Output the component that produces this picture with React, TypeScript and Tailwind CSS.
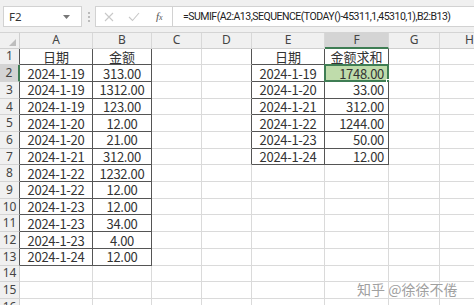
import React from 'react';

const cols = [
  { key: '', w: 20 },
  { key: 'A', w: 73 },
  { key: 'B', w: 59 },
  { key: 'C', w: 50 },
  { key: 'D', w: 50 },
  { key: 'E', w: 73 },
  { key: 'F', w: 64 },
  { key: 'G', w: 51 },
  { key: 'H', w: 60 },
];

const leftData = [
  ['日期', '金额'],
  ['2024-1-19', '313.00'],
  ['2024-1-19', '1312.00'],
  ['2024-1-19', '123.00'],
  ['2024-1-20', '12.00'],
  ['2024-1-20', '21.00'],
  ['2024-1-21', '312.00'],
  ['2024-1-22', '1232.00'],
  ['2024-1-22', '12.00'],
  ['2024-1-23', '12.00'],
  ['2024-1-23', '34.00'],
  ['2024-1-23', '4.00'],
  ['2024-1-24', '12.00'],
];

const rightData = [
  ['日期', '金额求和'],
  ['2024-1-19', '1748.00'],
  ['2024-1-20', '33.00'],
  ['2024-1-21', '312.00'],
  ['2024-1-22', '1244.00'],
  ['2024-1-23', '50.00'],
  ['2024-1-24', '12.00'],
];

// tables: col index 1..8 (A..H), row 1..n
function inTable(c: number, r: number) {
  if (c >= 1 && c <= 2 && r >= 1 && r <= 13) return true;
  if (c >= 5 && c <= 6 && r >= 1 && r <= 7) return true;
  return false;
}

function cellText(c: number, r: number): string {
  if (c >= 1 && c <= 2 && r >= 1 && r <= 13) return leftData[r - 1][c - 1];
  if (c >= 5 && c <= 6 && r >= 1 && r <= 7) return rightData[r - 1][c - 5];
  return '';
}

const ROWS = 16;
const cellFont = { fontFamily: '"Noto Sans CJK SC", "Noto Sans", sans-serif' };

function Cell({ c, r }: { c: number; r: number }) {
  const darkR = inTable(c, r) || inTable(c + 1, r);
  const darkB = inTable(c, r) || inTable(c, r + 1);
  const selected = c === 6 && r === 2;
  const text = cellText(c, r);
  const align = c === 6 && r > 1 ? 'justify-end pr-[4px]' : 'justify-center';
  const tight = r > 1 ? 'tracking-[-0.3px]' : '';
  return (
    <div
      className={`relative flex items-center ${align} ${tight} border-r border-b text-[13px] leading-none text-[#333] whitespace-nowrap ${
        darkR ? 'border-r-[#555]' : 'border-r-[#dadada]'
      } ${darkB ? 'border-b-[#555]' : 'border-b-[#dadada]'} ${selected ? 'bg-[#bfdcab]' : 'bg-white'}`}
      style={cellFont}
    >
      {text}
      {selected && (
        <>
          <div className="absolute -left-px -top-px -right-px -bottom-px border-2 border-[#3f7d54]" />
          <div className="absolute -right-[3px] -bottom-[3px] w-[5px] h-[5px] bg-[#3f7d54] border border-white" />
        </>
      )}
    </div>
  );
}

export default function App() {
  const template = cols.map((c) => `${c.w}px`).join(' ');
  return (
    <div className="w-[474px] h-[305px] overflow-hidden bg-white relative" style={{ fontFamily: '"Noto Sans", sans-serif' }}>
      {/* formula bar */}
      <div className="h-[33px] bg-[#f0f0f0] flex items-start pt-[6px] pl-[3px] border-b border-[#d4d4d4]">
        <div className="w-[79px] shrink-0 h-[21px] bg-white border border-[#d2d2d2] flex items-center justify-between px-[5px]">
          <span className="text-[11.5px] text-[#333]">F2</span>
          <svg width="7" height="4" viewBox="0 0 7 4" className="mr-[6px]">
            <path d="M0 0 L7 0 L3.5 4 Z" fill="#777" />
          </svg>
        </div>
        <div className="w-[14px] shrink-0 h-[21px] flex flex-col items-center justify-center gap-[2px]">
          <div className="w-[2px] h-[2px] bg-[#bbb]" />
          <div className="w-[2px] h-[2px] bg-[#bbb]" />
          <div className="w-[2px] h-[2px] bg-[#bbb]" />
        </div>
        <div className="flex-1 min-w-0 overflow-hidden h-[21px] bg-white border border-[#d2d2d2] border-r-0 flex items-center ml-[-1px]">
          <div className="w-[76px] shrink-0 flex items-center pl-[8px] gap-[14px]">
            <svg width="10" height="10" viewBox="0 0 10 10">
              <path d="M1 1 L9 9 M9 1 L1 9" stroke="#c8c8c8" strokeWidth="1.1" />
            </svg>
            <svg width="12" height="10" viewBox="0 0 12 10">
              <path d="M1 5 L4.5 8.5 L11 1" stroke="#c8c8c8" strokeWidth="1.1" fill="none" />
            </svg>
            <span className="text-[11px] italic text-[#555] ml-[2px]" style={{ fontFamily: '"Liberation Serif", serif' }}>
              f<span className="text-[8px]">x</span>
            </span>
          </div>
          <div className="w-px shrink-0 h-[21px] bg-[#d2d2d2]" />
          <span className="ml-[10px] text-[10.5px] text-[#222] whitespace-nowrap tracking-[-0.5px]" style={{ fontFamily: 'Roboto, sans-serif' }}>
            =SUMIF(A2:A13,SEQUENCE(TODAY()-45311,1,45310,1),B2:B13)
          </span>
        </div>
      </div>

      {/* sheet */}
      <div
        className="grid"
        style={{ gridTemplateColumns: template, gridTemplateRows: `15.6px repeat(${ROWS}, 16.7px)` }}
      >
        {cols.map((col, i) => {
          if (i === 0) {
            return (
              <div key="corner" className="relative bg-[#f0f0f0] border-r border-b border-[#cfcfcf]">
                <svg width="7" height="7" viewBox="0 0 7 7" className="absolute right-[3px] bottom-[2px]">
                  <path d="M7 0 L7 7 L0 7 Z" fill="#bdbdbd" />
                </svg>
              </div>
            );
          }
          const sel = i === 6;
          return (
            <div
              key={col.key}
              className={`flex items-center justify-center text-[12px] text-[#444] border-r ${
                sel ? 'bg-[#d4d4d4] border-b-2 border-b-[#3f7d54] text-[#2a5e3a]' : 'bg-[#f0f0f0] border-b border-b-[#cfcfcf]'
              } border-r-[#d8d8d8]`}
            >
              {col.key}
            </div>
          );
        })}
        {Array.from({ length: ROWS }, (_, ri) => {
          const r = ri + 1;
          return (
            <React.Fragment key={r}>
              <div
                className={`flex items-center justify-center text-[12px] leading-none text-[#444] border-b border-b-[#d4d4d4] ${
                  r === 2 ? 'bg-[#d4d4d4] border-r-2 border-r-[#3f7d54]' : 'bg-[#f0f0f0] border-r'
                } ${r !== 2 ? (r <= 13 ? 'border-r-[#555]' : 'border-r-[#cfcfcf]') : ''}`}
              >
                {r}
              </div>
              {cols.slice(1).map((_, ci) => (
                <Cell key={ci} c={ci + 1} r={r} />
              ))}
            </React.Fragment>
          );
        })}
      </div>

      {/* watermark */}
      <div
        className="absolute left-[357px] top-[279px] text-[14px] text-[#a0a0a0] whitespace-nowrap"
        style={{ fontFamily: '"Noto Sans CJK SC", sans-serif', textShadow: '0 0 2px #fff, 0 0 2px #fff' }}
      >
        知乎 @徐徐不倦
      </div>
    </div>
  );
}
